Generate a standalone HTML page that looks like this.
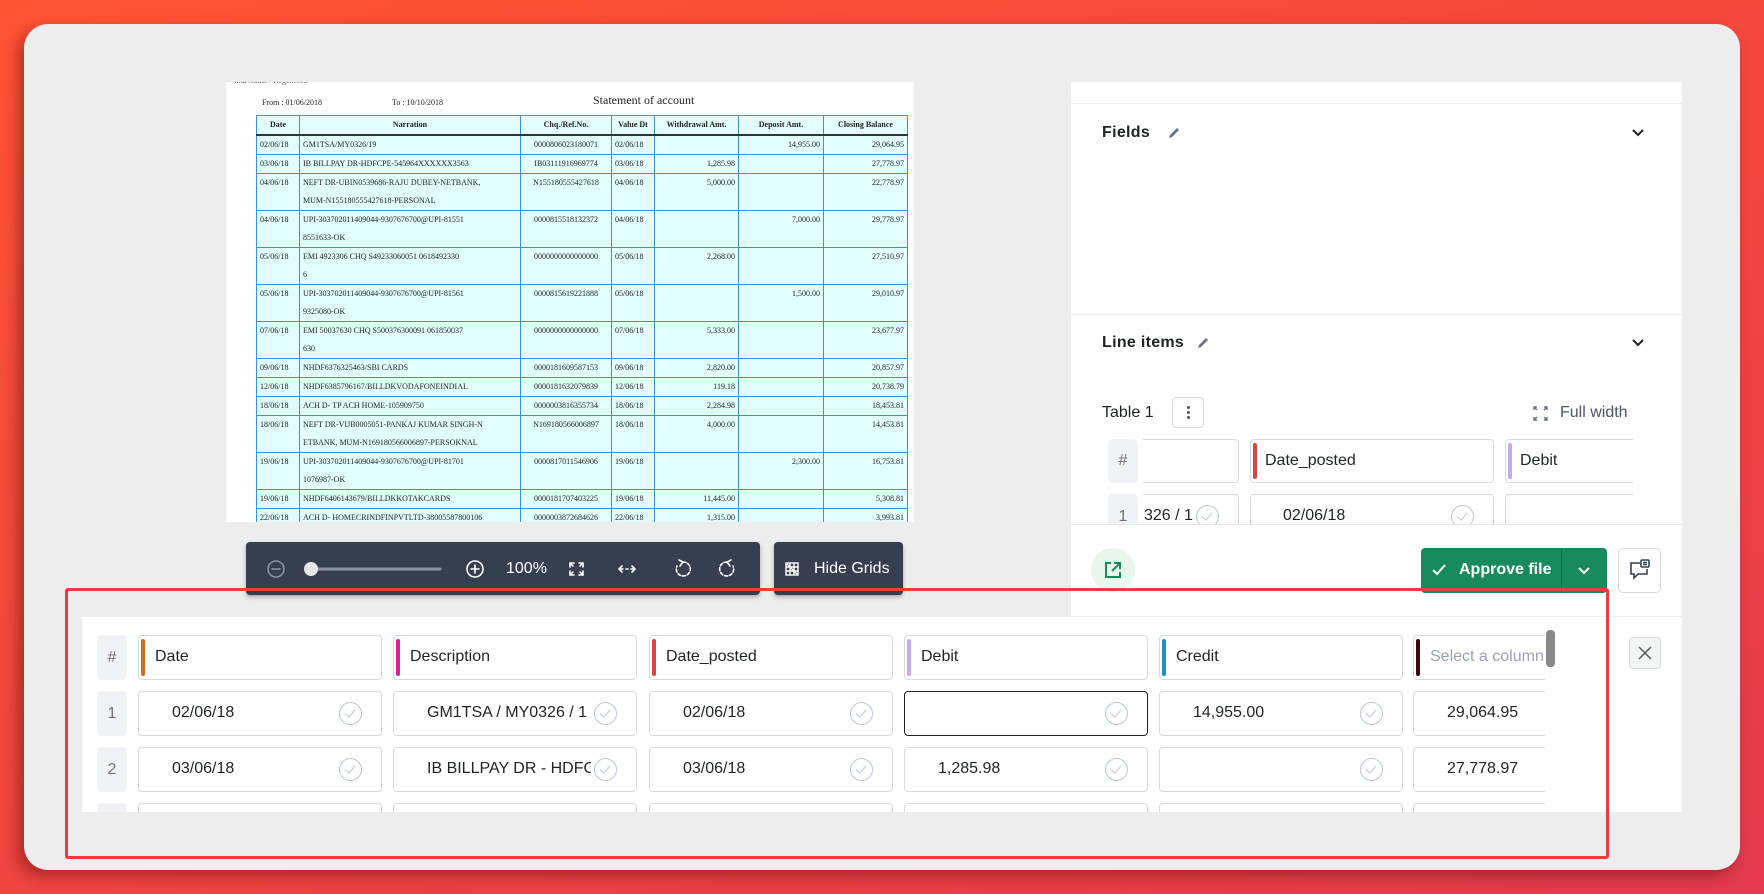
<!DOCTYPE html>
<html><head><meta charset="utf-8"><style>
*{box-sizing:border-box;margin:0;padding:0}
body{width:1764px;height:894px;overflow:hidden;position:relative;font-family:"Liberation Sans",sans-serif;background:linear-gradient(160deg,#ff5334 0%,#f4473c 45%,#e13a4e 100%)}
.abs{position:absolute}
#card{left:24px;top:24px;width:1716px;height:846px;background:#ededed;border-radius:24px;box-shadow:-6px 6px 14px rgba(90,10,10,.45)}
#doc{left:226px;top:82px;width:688px;height:440px;background:#fff;overflow:hidden;font-family:"Liberation Serif",serif;color:#222}
#doc table{position:absolute;left:30px;top:33px;border-collapse:collapse;table-layout:fixed;font-size:8px}
#doc td,#doc th{border:1px solid #3b8fe0;background:#e2fdfd;padding:0 3px;vertical-align:top;line-height:18px;white-space:nowrap;overflow:hidden}
#doc th{font-weight:bold;text-align:center;height:18px;border-bottom:2px solid #333}
#doc td{border-bottom:1.5px dashed #2a2a4a}
#doc td.r{text-align:right}
#doc td.c{text-align:center}
#doc tr.d td{height:37px}
#doc tr.s td{height:18.5px}
.tb{background:#363f4f;border-radius:4px;color:#fff;height:53px;top:542px;box-shadow:0 2px 4px rgba(0,0,0,.3)}
.panel{background:#fff}
.cell{position:absolute;height:45px;border:1.5px solid #d5d9e0;border-radius:4px;background:#fff;font-size:16px;color:#1f2328;line-height:42px;overflow:hidden;white-space:nowrap}
.bar{position:absolute;left:2px;top:3px;bottom:3px;width:4px;border-radius:2px}
.num{position:absolute;width:30px;height:45px;background:#f1f2f5;border-radius:5px;color:#6b7280;font-size:16px;text-align:center;line-height:45px}
.chk{position:absolute;top:10px;width:23px;height:23px;border:1.5px solid #b8c6da;border-radius:50%}
.chk:after{content:"";position:absolute;left:7px;top:4px;width:5px;height:9px;border-right:1.5px solid #b8c6da;border-bottom:1.5px solid #b8c6da;transform:rotate(40deg)}
.hd{font-size:16px;font-weight:600;color:#1f2328;letter-spacing:.3px}
</style></head><body>
<div id="card" class="abs"></div>

<div id="doc" class="abs">
 <div class="abs" style="left:8px;top:-6px;font-size:8px;color:#555">Individual / Registered</div>
 <div class="abs" style="left:36px;top:16px;font-size:8px">From : 01/06/2018</div>
 <div class="abs" style="left:166px;top:16px;font-size:8px">To : 10/10/2018</div>
 <div class="abs" style="left:367px;top:11px;font-size:12px">Statement of account</div>
 <table>
  <colgroup><col style="width:43px"><col style="width:221px"><col style="width:91px"><col style="width:43px"><col style="width:84px"><col style="width:85px"><col style="width:84px"></colgroup>
  <tr><th>Date</th><th>Narration</th><th>Chq./Ref.No.</th><th>Value Dt</th><th>Withdrawal Amt.</th><th>Deposit Amt.</th><th>Closing Balance</th></tr>
  <tr class="s"><td>02/06/18</td><td>GM1TSA/MY0326/19</td><td class="c">0000806023180071</td><td>02/06/18</td><td class="r"></td><td class="r">14,955.00</td><td class="r">29,064.95</td></tr>
  <tr class="s"><td>03/06/18</td><td>IB BILLPAY DR-HDFCPE-545964XXXXXX3563</td><td class="c">IB03111916969774</td><td>03/06/18</td><td class="r">1,285.98</td><td class="r"></td><td class="r">27,778.97</td></tr>
  <tr class="d"><td>04/06/18</td><td>NEFT DR-UBIN0539686-RAJU DUBEY-NETBANK,<br>MUM-N155180555427618-PERSONAL</td><td class="c">N155180555427618</td><td>04/06/18</td><td class="r">5,000.00</td><td class="r"></td><td class="r">22,778.97</td></tr>
  <tr class="d"><td>04/06/18</td><td>UPI-303702011409044-9307676700@UPI-81551<br>8551633-OK</td><td class="c">0000815518132372</td><td>04/06/18</td><td class="r"></td><td class="r">7,000.00</td><td class="r">29,778.97</td></tr>
  <tr class="d"><td>05/06/18</td><td>EMI 4923306 CHQ S49233060051 0618492330<br>6</td><td class="c">0000000000000000</td><td>05/06/18</td><td class="r">2,268.00</td><td class="r"></td><td class="r">27,510.97</td></tr>
  <tr class="d"><td>05/06/18</td><td>UPI-303702011409044-9307676700@UPI-81561<br>9325080-OK</td><td class="c">0000815619221888</td><td>05/06/18</td><td class="r"></td><td class="r">1,500.00</td><td class="r">29,010.97</td></tr>
  <tr class="d"><td>07/06/18</td><td>EMI 50037630 CHQ S500376300091 061850037<br>630</td><td class="c">0000000000000000</td><td>07/06/18</td><td class="r">5,333.00</td><td class="r"></td><td class="r">23,677.97</td></tr>
  <tr class="s"><td>09/06/18</td><td>NHDF6376325463/SBI CARDS</td><td class="c">0000181609587153</td><td>09/06/18</td><td class="r">2,820.00</td><td class="r"></td><td class="r">20,857.97</td></tr>
  <tr class="s"><td>12/06/18</td><td>NHDF6385796167/BILLDKVODAFONEINDIAL</td><td class="c">0000181632079839</td><td>12/06/18</td><td class="r">119.18</td><td class="r"></td><td class="r">20,738.79</td></tr>
  <tr class="s"><td>18/06/18</td><td>ACH D- TP ACH HOME-105909750</td><td class="c">0000003816355734</td><td>18/06/18</td><td class="r">2,284.98</td><td class="r"></td><td class="r">18,453.81</td></tr>
  <tr class="d"><td>18/06/18</td><td>NEFT DR-VIJB0005051-PANKAJ KUMAR SINGH-N<br>ETBANK, MUM-N169180566006897-PERSOKNAL</td><td class="c">N169180566006897</td><td>18/06/18</td><td class="r">4,000.00</td><td class="r"></td><td class="r">14,453.81</td></tr>
  <tr class="d"><td>19/06/18</td><td>UPI-303702011409044-9307676700@UPI-81701<br>1076987-OK</td><td class="c">0000817011546906</td><td>19/06/18</td><td class="r"></td><td class="r">2,300.00</td><td class="r">16,753.81</td></tr>
  <tr class="s"><td>19/06/18</td><td>NHDF6406143679/BILLDKKOTAKCARDS</td><td class="c">0000181707403225</td><td>19/06/18</td><td class="r">11,445.00</td><td class="r"></td><td class="r">5,308.81</td></tr>
  <tr class="s"><td>22/06/18</td><td>ACH D- HOMECRINDFINPVTLTD-38005587800106</td><td class="c">0000003872684626</td><td>22/06/18</td><td class="r">1,315.00</td><td class="r"></td><td class="r">3,993.81</td></tr>
 </table>
</div>

<!-- toolbar -->
<div class="abs tb" style="left:246px;width:514px">
 <svg class="abs" style="left:0;top:0" width="514" height="53" fill="none" stroke-linecap="round">
  <circle cx="30" cy="27" r="8" stroke="#8a93a3" stroke-width="1.6"/><line x1="26" y1="27" x2="34" y2="27" stroke="#8a93a3" stroke-width="1.6"/>
  <line x1="65" y1="27" x2="194" y2="27" stroke="#8a93a3" stroke-width="3"/>
  <circle cx="65" cy="27" r="7" fill="#e6e7ea"/>
  <circle cx="229" cy="27" r="8" stroke="#fff" stroke-width="1.6"/><line x1="225" y1="27" x2="233" y2="27" stroke="#fff" stroke-width="1.6"/><line x1="229" y1="23" x2="229" y2="31" stroke="#fff" stroke-width="1.6"/>
  <g stroke="#fff" stroke-width="1.6"><path d="M324 21l4 0M324 21l0 4M327 24l-3-3M337 21l-4 0M337 21l0 4M334 24l3-3M324 33l4 0M324 33l0-4M327 30l-3 3M337 33l-4 0M337 33l0-4M334 30l3 3"/>
  <path d="M375 27h2M380 27h2M376 24l-3 3 3 3M385 27h2M386 24l3 3-3 3"/>
  <path d="M437 20a7 7 0 1 1-6 4" stroke-dasharray="3 2"/><path d="M433 18l4 2-3 4"/>
  <path d="M481 20a7 7 0 1 0 6 4" stroke-dasharray="3 2"/><path d="M485 18l-4 2 3 4"/></g>
 </svg>
 <div class="abs" style="left:260px;top:18px;font-size:16px;color:#fff">100%</div>
</div>
<div class="abs tb" style="left:774px;width:129px">
 <svg class="abs" style="left:11px;top:20px" width="14" height="14" fill="none" stroke="#fff" stroke-width="1.4"><rect x="1" y="1" width="12" height="12"/><path d="M5 1v12M9 1v12M1 5h12M1 9h12M1 1l12 12"/></svg>
 <div class="abs" style="left:40px;top:18px;font-size:16px;color:#fff">Hide Grids</div>
</div>

<!-- right panel -->
<div class="abs panel" style="left:1071px;top:82px;width:611px;height:534px">
 <div class="abs" style="left:0;top:21px;width:611px;height:1px;background:#eceef1"></div>
 <div class="abs hd" style="left:31px;top:42px">Fields</div>
 <svg class="abs" style="left:96px;top:44px" width="14" height="14"><path d="M2 12l1-3 7-7 2 2-7 7z" fill="#6b7280"/></svg>
 <svg class="abs" style="left:560px;top:46px" width="14" height="10" fill="none" stroke="#1f2328" stroke-width="2"><path d="M2 2l5 5 5-5"/></svg>
 <div class="abs" style="left:0;top:232px;width:611px;height:1px;background:#eceef1"></div>
 <div class="abs hd" style="left:31px;top:252px">Line items</div>
 <svg class="abs" style="left:125px;top:254px" width="14" height="14"><path d="M2 12l1-3 7-7 2 2-7 7z" fill="#6b7280"/></svg>
 <svg class="abs" style="left:560px;top:256px" width="14" height="10" fill="none" stroke="#1f2328" stroke-width="2"><path d="M2 2l5 5 5-5"/></svg>
 <div class="abs" style="left:31px;top:322px;font-size:16px;color:#1f2328">Table 1</div>
 <div class="abs" style="left:101px;top:315px;width:32px;height:31px;border:1px solid #d5d9e0;border-radius:4px"><div style="position:absolute;left:14px;top:8px;width:3px;height:3px;background:#555;border-radius:50%;box-shadow:0 5px 0 #555,0 10px 0 #555"></div></div>
 <svg class="abs" style="left:462px;top:324px" width="15" height="15" fill="none" stroke="#6b7280" stroke-width="1.4"><path d="M1 4V1h3M1 1l3 3M14 4V1h-3M14 1l-3 3M1 11v3h3M1 14l3-3M14 11v3h-3M14 14l-3-3"/></svg>
 <div class="abs" style="left:489px;top:322px;font-size:16px;color:#4b5563">Full width</div>
 <div class="abs" style="left:37px;top:357px;width:525px;height:85px;overflow:hidden">
  <div class="num" style="left:0;top:0;height:44px;line-height:44px">#</div>
  <div class="cell" style="left:35px;top:0;width:96px;height:44px;border-left:none;border-radius:0 4px 4px 0"></div>
  <div class="cell" style="left:142px;top:0;width:244px;height:44px;padding-left:14px"><div class="bar" style="background:#d9443c"></div>Date_posted</div>
  <div class="cell" style="left:397px;top:0;width:160px;height:44px;padding-left:14px"><div class="bar" style="background:#c9a7ef"></div>Debit</div>
  <div class="num" style="left:0;top:55px">1</div>
  <div class="cell" style="left:35px;top:55px;width:96px;border-left:none;border-radius:0 4px 4px 0;padding-left:1px">326 / 1<div class="chk" style="left:53px"></div></div>
  <div class="cell" style="left:142px;top:55px;width:244px;padding-left:32px">02/06/18<div class="chk" style="left:200px"></div></div>
  <div class="cell" style="left:397px;top:55px;width:160px"></div>
 </div>
 <div class="abs" style="left:0;top:442px;width:611px;height:1px;background:#e5e7eb"></div>
 <div class="abs" style="left:20px;top:466px;width:44px;height:44px;border-radius:50%;background:#e9f6ee"></div>
 <svg class="abs" style="left:32px;top:478px" width="20" height="20" fill="none" stroke="#1a8a5a" stroke-width="2"><path d="M8 3H3v14h14v-5M11 3h6v6M17 3l-8 8"/></svg>
 <div class="abs" style="left:350px;top:466px;width:186px;height:45px;background:#198a5c;border-radius:4px;color:#fff">
  <svg class="abs" style="left:10px;top:15px" width="16" height="14" fill="none" stroke="#fff" stroke-width="2"><path d="M2 7l4 4 8-9"/></svg>
  <div class="abs" style="left:38px;top:13px;font-size:16px;font-weight:bold">Approve file</div>
  <div class="abs" style="left:140px;top:0;width:1px;height:45px;background:#126b47"></div>
  <svg class="abs" style="left:157px;top:19px" width="12" height="8" fill="none" stroke="#fff" stroke-width="2"><path d="M1 1l5 5 5-5"/></svg>
 </div>
 <div class="abs" style="left:547px;top:466px;width:43px;height:45px;border:1.5px solid #d5d9e0;border-radius:5px;background:#fff">
  <svg class="abs" style="left:9px;top:10px" width="24" height="24" fill="none" stroke="#374151" stroke-width="1.6"><path d="M12 4H3v11h3v4l4-4h9v-5"/><rect x="13" y="1" width="8" height="7" rx="1"/><path d="M15 3.5h4M15 5.5h4"/></svg>
 </div>
</div>

<!-- bottom panel -->
<div class="abs panel" style="left:82px;top:617px;width:1600px;height:195px"></div>
<div class="abs" style="left:82px;top:617px;width:1463px;height:195px;overflow:hidden">
 <div style="position:absolute;left:-82px;top:-617px;width:1700px;height:900px">
  <div class="num" style="left:97px;top:635px">#</div>
  <div class="num" style="left:97px;top:691px">1</div>
  <div class="num" style="left:97px;top:747px">2</div>
  <div class="num" style="left:97px;top:803px"></div>

  <div class="cell" style="left:138px;top:635px;width:244px;padding-left:16px"><div class="bar" style="background:#d2691e"></div>Date</div>
  <div class="cell" style="left:393px;top:635px;width:244px;padding-left:16px"><div class="bar" style="background:#e11d9a"></div>Description</div>
  <div class="cell" style="left:649px;top:635px;width:244px;padding-left:16px"><div class="bar" style="background:#d9443c"></div>Date_posted</div>
  <div class="cell" style="left:904px;top:635px;width:244px;padding-left:16px"><div class="bar" style="background:#c9a7ef"></div>Debit</div>
  <div class="cell" style="left:1159px;top:635px;width:244px;padding-left:16px"><div class="bar" style="background:#1b8ecf"></div>Credit</div>
  <div class="cell" style="left:1413px;top:635px;width:244px;padding-left:16px;color:#9ca3af"><div class="bar" style="background:#3a0a0a"></div>Select a column</div>

  <div class="cell" style="left:138px;top:691px;width:244px;padding-left:33px">02/06/18<div class="chk" style="left:200px"></div></div>
  <div class="cell" style="left:393px;top:691px;width:244px;padding-left:33px">GM1TSA / MY0326 / 1<div class="abs" style="left:197px;top:0;width:50px;height:42px;background:#fff"></div><div class="chk" style="left:200px"></div></div>
  <div class="cell" style="left:649px;top:691px;width:244px;padding-left:33px">02/06/18<div class="chk" style="left:200px"></div></div>
  <div class="cell" style="left:904px;top:691px;width:244px;border-color:#222"><div class="chk" style="left:200px"></div></div>
  <div class="cell" style="left:1159px;top:691px;width:244px;padding-left:33px">14,955.00<div class="chk" style="left:200px"></div></div>
  <div class="cell" style="left:1413px;top:691px;width:244px;padding-left:33px">29,064.95</div>

  <div class="cell" style="left:138px;top:747px;width:244px;padding-left:33px">03/06/18<div class="chk" style="left:200px"></div></div>
  <div class="cell" style="left:393px;top:747px;width:244px;padding-left:33px">IB BILLPAY DR - HDFC<div class="abs" style="left:197px;top:0;width:50px;height:42px;background:#fff"></div><div class="chk" style="left:200px"></div></div>
  <div class="cell" style="left:649px;top:747px;width:244px;padding-left:33px">03/06/18<div class="chk" style="left:200px"></div></div>
  <div class="cell" style="left:904px;top:747px;width:244px;padding-left:33px">1,285.98<div class="chk" style="left:200px"></div></div>
  <div class="cell" style="left:1159px;top:747px;width:244px"><div class="chk" style="left:200px"></div></div>
  <div class="cell" style="left:1413px;top:747px;width:244px;padding-left:33px">27,778.97</div>

  <div class="cell" style="left:138px;top:803px;width:244px"></div>
  <div class="cell" style="left:393px;top:803px;width:244px"></div>
  <div class="cell" style="left:649px;top:803px;width:244px"></div>
  <div class="cell" style="left:904px;top:803px;width:244px"></div>
  <div class="cell" style="left:1159px;top:803px;width:244px"></div>
  <div class="cell" style="left:1413px;top:803px;width:244px"></div>
 </div>
</div>
<div class="abs" style="left:1546px;top:630px;width:9px;height:37px;background:#888;border-radius:4px"></div>
<div class="abs" style="left:1629px;top:637px;width:32px;height:32px;border:1.5px solid #d5d9e0;border-radius:4px;background:#f3f4f6">
 <svg class="abs" style="left:8px;top:8px" width="14" height="14" stroke="#555" stroke-width="1.5"><path d="M1 1l12 12M13 1L1 13"/></svg>
</div>

<!-- red highlight -->
<div class="abs" style="left:65px;top:588px;width:1544px;height:271px;border:3px solid #ef3b3b;border-radius:3px"></div>
</body></html>
